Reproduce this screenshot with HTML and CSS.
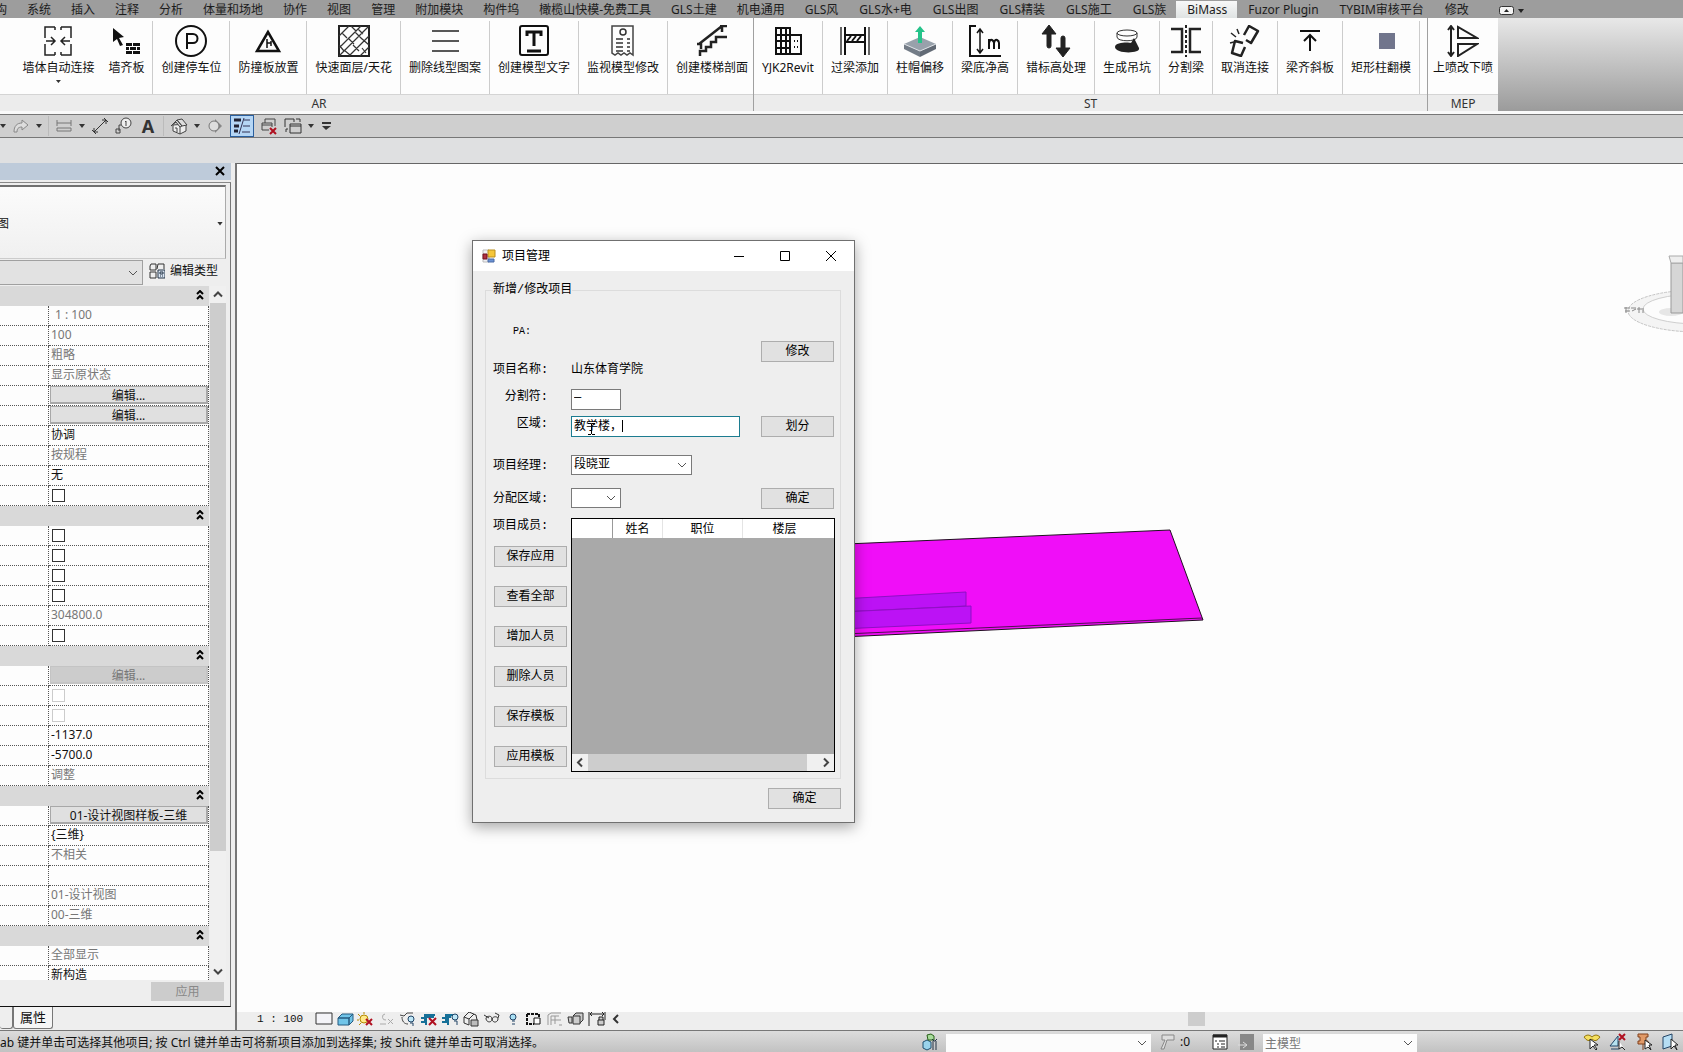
FILE: index.html
```html
<!doctype html>
<html lang="zh-CN">
    <head>
        <meta charset="utf-8">
        <title>项目管理</title>
        <link rel="stylesheet" href="styles.css">
    </head>
    <body>
        <div class="app">
            <nav class="menubar">
                <a href="#">构</a>
                <a href="#">系统</a>
                <a href="#">插入</a>
                <a href="#">注释</a>
                <a href="#">分析</a>
                <a href="#">体量和场地</a>
                <a href="#">协作</a>
                <a href="#">视图</a>
                <a href="#">管理</a>
                <a href="#">附加模块</a>
                <a href="#">构件坞</a>
                <a href="#">橄榄山快模-免费工具</a>
                <a href="#">GLS土建</a>
                <a href="#">机电通用</a>
                <a href="#">GLS风</a>
                <a href="#">GLS水+电</a>
                <a href="#">GLS出图</a>
                <a href="#">GLS精装</a>
                <a href="#">GLS施工</a>
                <a href="#">GLS族</a>
                <a href="#" class="active">BiMass</a>
                <a href="#">Fuzor Plugin</a>
                <a href="#">TYBIM审核平台</a>
                <a href="#">修改</a>
                <button class="collapse" aria-label="最小化功能区">
                    <svg width="26" height="10" viewBox="0 0 26 10"><rect x=".5" y=".5" width="14" height="8" rx="2" fill="#f4f4f4" stroke="#333"/><path d="M5 6l2.500-3L10 6z" fill="#222"/><path d="M19 3h6l-3 4z" fill="#222"/></svg>
                </button>
            </nav>

            <div class="ribbon">
                <section class="panel panel-ar">
                    <div class="tools">
                        <div class="group first">
                            <button><svg viewBox="0 0 32 32"><path d="M13 2H3v11M3 19v11h10M19 2h10v11M29 19v11H19M13 2v3M13 27v3M19 2v3M19 27v3" fill="none" stroke="#222" stroke-width="1.500"/><path d="M4 16h9M9 12l4 4-4 4M28 16h-9M23 12l-4 4 4 4" fill="none" stroke="#222" stroke-width="1.500"/></svg><span>墙体自动连接</span><i class="caret"></i></button>
                            <button><svg viewBox="0 0 32 32"><path d="M3 3l11 9-5 1 4 7-3 1-3-7-4 3z" fill="#111"/><path d="M16 18h6v3h-6zM23 18h7v3h-7zM16 22h3v3h-3zM20 22h6v3h-6zM27 22h3v3h-3zM16 26h6v3h-6zM23 26h7v3h-7z" fill="#111"/></svg><span>墙齐板</span></button>
                        </div>
                        <div class="group"><button><svg viewBox="0 0 32 32"><circle cx="16" cy="16" r="15" fill="none" stroke="#111" stroke-width="2"/><path d="M12 24V9h6a4 4 0 0 1 0 9h-6" fill="none" stroke="#111" stroke-width="2"/></svg><span>创建停车位</span></button></div>
                        <div class="group"><button><svg viewBox="0 0 32 32"><path d="M16 7L5 26h22z" fill="none" stroke="#111" stroke-width="2.500"/><path d="M15 14v9M15 18h4M19 16v5" stroke="#111" stroke-width="1.500"/></svg><span>防撞板放置</span></button></div>
                        <div class="group"><button><svg viewBox="0 0 32 32"><path d="M1 1h30v30H1z" fill="none" stroke="#222" stroke-width="2"/><path d="M1 11L11 1M1 23L23 1M1 31L31 1M11 31l20-20M22 31l9-9M4 8l5 5M13 1l5 5M10 13l6 6M20 4l5 5M1 20l5 6M17 7l7 7M15 20l6 6M23 13l8 7M6 25l6 5M24 23l4 5" fill="none" stroke="#333" stroke-width="1.200"/></svg><span>快速面层/天花</span></button></div>
                        <div class="group"><button><svg viewBox="0 0 32 32"><path d="M3 6h27M3 16h27M3 26h27" stroke="#222" stroke-width="1.500"/></svg><span>删除线型图案</span></button></div>
                        <div class="group"><button><svg viewBox="0 0 32 32"><rect x="2" y="1" width="28" height="29" rx="2" fill="none" stroke="#111" stroke-width="2"/><path d="M9 11V7h14v4M16 7v14M9 26h14" fill="none" stroke="#111" stroke-width="3"/></svg><span>创建模型文字</span></button></div>
                        <div class="group"><button><svg viewBox="0 0 32 32"><path d="M5 1h21v29l-3-2-3 2-3-2-3 2-3-2-3 2-3-2z" fill="none" stroke="#444" stroke-width="1.500"/><circle cx="16" cy="7" r="3" fill="none" stroke="#333" stroke-width="1.500"/><path d="M9 14h7M9 18h7M9 22h7M9 26h7M20 14h3M20 18h3M20 22h3M20 26h3" stroke="#333" stroke-width="1.500"/></svg><span>监视模型修改</span></button></div>
                        <div class="group"><button><svg viewBox="0 0 32 32"><path d="M3 19L26 1M1 19h4v5M24 1h7M26 1v6M4 31v-5h6v-4h5v-5h5v-5h6" fill="none" stroke="#222" stroke-width="2.500"/><path d="M26 12h5" stroke="#222" stroke-width="2.500"/></svg><span>创建楼梯剖面</span></button></div>
                    </div>
                    <h2>AR</h2>
                </section>
                <section class="panel">
                    <div class="tools">
                        <div class="group"><button><svg viewBox="0 0 32 32"><path d="M4 3h14v26H4zM9 3v26M14 3v26M4 10h14M4 16h14M4 23h14M18 10h11v19H18" fill="none" stroke="#111" stroke-width="2"/><path d="M22 16h1M25 16h1M22 22h1M25 22h1" stroke="#111" stroke-width="2"/></svg><span>YJK2Revit</span></button></div>
                        <div class="group"><button><svg viewBox="0 0 32 32"><path d="M2 2v28M30 2v28" stroke="#666" stroke-width="2"/><path d="M6 2v28M26 2v28M6 10h20M6 17h20M8 16l4-5M13 16l4-5M18 16l4-5" fill="none" stroke="#111" stroke-width="2"/></svg><span>过梁添加</span></button></div>
                        <div class="group"><button><svg viewBox="0 0 32 32"><path d="M16 12l16 7-16 7-16-7z" fill="#98a1ab"/><path d="M0 19l16 7v6L0 24z" fill="#737c87"/><path d="M32 19l-16 7v6l16-8z" fill="#626a75"/><path d="M0 19l16 7 16-7" fill="none" stroke="#dde1e5"/><path d="M14 18V7h-3l5-6 5 6h-3v11z" fill="#25c38a"/></svg><span>柱帽偏移</span></button></div>
                        <div class="group"><button><svg viewBox="0 0 32 32"><path d="M7 1H1v30h31" fill="none" stroke="#111" stroke-width="2"/><path d="M11 4v24M8 8l3-4 3 4M8 24l3 4 3-4" fill="none" stroke="#111" stroke-width="1.500"/><path d="M20 24V14M20 18q1-4 3-3t2 3v6M25 18q1-4 3-3t2 3v6" fill="none" stroke="#111" stroke-width="2"/></svg><span>梁底净高</span></button></div>
                        <div class="group"><button><svg viewBox="0 0 32 32"><path d="M9 0l7 9h-5v12a2 2 0 0 1-4 0V9H2zM23 32l-7-9h5V13a2 2 0 0 1 4 0v10h5z" fill="#222" stroke="#222"/></svg><span>错标高处理</span></button></div>
                        <div class="group"><button><svg viewBox="0 0 32 32"><ellipse cx="16" cy="8" rx="10" ry="3" fill="none" stroke="#333"/><path d="M6 8v4c0 5 20 5 20 0V8" fill="none" stroke="#333"/><path d="M4 22c0-5 14-5 16-4l3-5 5 10c2 6-24 6-24-1z" fill="#222"/></svg><span>生成吊坑</span></button></div>
                        <div class="group"><button><svg viewBox="0 0 32 32"><path d="M1 4h11v23H1M31 4H20v23h11" fill="none" stroke="#222" stroke-width="2.500"/><path d="M16 0v32" stroke="#222" stroke-width="2" stroke-dasharray="3 2"/></svg><span>分割梁</span></button></div>
                        <div class="group"><button><svg viewBox="0 0 32 32"><path d="M15 10l5-9 9 5-7 12-5-3M14 18l-8-2-3 12 9 3 4-9" fill="none" stroke="#222" stroke-width="2.500" stroke-linejoin="round"/><path d="M2 8l5 4M8 4l2 5M1 18l4-1" stroke="#222" stroke-width="1.500"/></svg><span>取消连接</span></button></div>
                        <div class="group"><button><svg viewBox="0 0 32 32"><path d="M6 6h20" stroke="#111" stroke-width="2"/><path d="M16 26V10M10 16l6-6 6 6" fill="none" stroke="#111" stroke-width="2"/></svg><span>梁齐斜板</span></button></div>
                        <div class="group"><button><svg viewBox="0 0 32 32"><path d="M14 8h16v16H14z" fill="#71758c"/></svg><span>矩形柱翻模</span></button></div>
                    </div>
                    <h2>ST</h2>
                </section>
                <section class="panel">
                    <div class="tools">
                        <div class="group"><button><svg viewBox="0 0 32 32"><path d="M4 1v30M1 5l3-4 3 4M1 27l3 4 3-4M11 2v11h19zM11 31V19h19z" fill="none" stroke="#222" stroke-width="2"/></svg><span>上喷改下喷</span></button></div>
                    </div>
                    <h2>MEP</h2>
                </section>
            </div>

            <div class="quickbar">
                <i class="caret"></i>
                <button aria-label="重做"><svg viewBox="0 0 18 18"><path d="M2 15c0-6 3-9 8-9V3l6 5-6 5v-3c-4 0-5 2-5 5z" fill="#ddd" stroke="#888"/></svg></button>
                <i class="caret"></i>
                <i class="sep"></i>
                <button aria-label="测量"><svg viewBox="0 0 18 18"><path d="M2 6h14M2 3v6M16 3v6M2 11h14v3H2z" fill="none" stroke="#777"/></svg></button>
                <i class="caret"></i>
                <button aria-label="对齐标注"><svg viewBox="0 0 18 18"><path d="M3 15L15 3M3 11v4h4M11 3h4v4M1 13l4 4M13 1l4 4" fill="none" stroke="#333"/></svg></button>
                <button aria-label="标记"><svg viewBox="0 0 18 18"><circle cx="11" cy="6" r="5" fill="#eee" stroke="#444"/><path d="M10 5l1-1v5M6 8H4v6M1 12h4v4H1z" fill="none" stroke="#444"/></svg></button>
                <button class="letter" aria-label="文字">A</button>
                <i class="sep"></i>
                <button aria-label="三维视图"><svg viewBox="0 0 18 18"><path d="M3 8v6l7 3 6-3V7z" fill="#eee" stroke="#444"/><path d="M1 9l6-6 5 6-2 1-4-5zM7 3l5-1 5 6-5 1z" fill="#ddd" stroke="#444"/><path d="M10 10v7M5 11h2v4" fill="none" stroke="#444"/></svg></button>
                <i class="caret"></i>
                <button aria-label="剖面"><svg viewBox="0 0 18 18"><path d="M9 2l7 7-7 7z" fill="#888"/><circle cx="8" cy="9" r="5" fill="#ddd" stroke="#777"/></svg></button>
                <button class="on" aria-label="细线"><svg viewBox="0 0 18 18"><path d="M1 3h7M1 9h5M1 14h4" stroke="#223" stroke-width="3"/><path d="M11 1L6 17M11 3h6M10 9h7M9 15h8" stroke="#335" fill="none"/></svg></button>
                <button aria-label="关闭隐藏窗口"><svg viewBox="0 0 18 18"><path d="M5 6V2h10v7M2 13V6h10v4M2 8h10M2 13h7" fill="none" stroke="#444"/><path d="M10 11l6 6M16 11l-6 6" stroke="#b01020" stroke-width="2"/></svg></button>
                <button aria-label="切换窗口"><svg viewBox="0 0 18 18"><path d="M1 10V2h9v3M6 7h11v9H6zM6 9h11M12 2h4v3M4 12H2v3" fill="none" stroke="#333"/></svg></button>
                <i class="caret"></i>
                <button aria-label="自定义"><svg viewBox="0 0 18 18"><path d="M2 6h9" stroke="#333" stroke-width="2"/><path d="M2 9h9l-5 4z" fill="#333"/></svg></button>
            </div>

            <main class="work">
                <aside class="palette">
                    <header><button aria-label="关闭属性"><svg width="10" height="10" viewBox="0 0 10 10"><path d="M1 1l8 8M9 1L1 9" stroke="#000" stroke-width="2"/></svg></button></header>
                    <div class="frame">
                        <div class="type"><span>图</span><i class="caret"></i></div>
                        <div class="filter">
                            <select aria-label="视图类型"><option></option></select>
                            <button><svg width="16" height="16" viewBox="0 0 16 16"><path d="M2 1h5v6H1V3zM9 1h6v5M1 9h6v6H1zM9 1L8 6" fill="none" stroke="#333"/><path d="M9 7h7v8H9z" fill="#dbe6f4" stroke="#234"/><path d="M11 9h3v2h-3zM11 13h1M13 13h1" stroke="#234" fill="none"/></svg>编辑类型</button>
                        </div>
                        <div class="sheet">
                            <table>
                                <colgroup><col class="key"><col></colgroup>
                                <tr class="cat"><td colspan="2"><svg viewBox="0 0 8 10"><path d="M1 4l3-3 3 3M1 9l3-3 3 3"/></svg></td></tr>
                                <tr><td></td><td class="dim indent">1 : 100</td></tr>
                                <tr><td></td><td class="dim">100</td></tr>
                                <tr><td></td><td class="dim">粗略</td></tr>
                                <tr><td></td><td class="dim">显示原状态</td></tr>
                                <tr><td></td><td><button>编辑...</button></td></tr>
                                <tr><td></td><td><button>编辑...</button></td></tr>
                                <tr><td></td><td>协调</td></tr>
                                <tr><td></td><td class="dim">按规程</td></tr>
                                <tr><td></td><td>无</td></tr>
                                <tr><td></td><td><input type="checkbox" aria-label="日光路径"></td></tr>
                                <tr class="cat"><td colspan="2"><svg viewBox="0 0 8 10"><path d="M1 4l3-3 3 3M1 9l3-3 3 3"/></svg></td></tr>
                                <tr><td></td><td><input type="checkbox" aria-label="裁剪视图"></td></tr>
                                <tr><td></td><td><input type="checkbox" aria-label="裁剪区域可见"></td></tr>
                                <tr><td></td><td><input type="checkbox" aria-label="注释裁剪"></td></tr>
                                <tr><td></td><td><input type="checkbox" aria-label="远剪裁激活"></td></tr>
                                <tr><td></td><td class="dim">304800.0</td></tr>
                                <tr><td></td><td><input type="checkbox" aria-label="剖面框"></td></tr>
                                <tr class="cat"><td colspan="2"><svg viewBox="0 0 8 10"><path d="M1 4l3-3 3 3M1 9l3-3 3 3"/></svg></td></tr>
                                <tr><td></td><td><button disabled>编辑...</button></td></tr>
                                <tr><td></td><td><input type="checkbox" aria-label="锁定的方向" disabled></td></tr>
                                <tr><td></td><td><input type="checkbox" aria-label="透视图" disabled></td></tr>
                                <tr><td></td><td>-1137.0</td></tr>
                                <tr><td></td><td>-5700.0</td></tr>
                                <tr><td></td><td class="dim">调整</td></tr>
                                <tr class="cat"><td colspan="2"><svg viewBox="0 0 8 10"><path d="M1 4l3-3 3 3M1 9l3-3 3 3"/></svg></td></tr>
                                <tr><td></td><td><button>01-设计视图样板-三维</button></td></tr>
                                <tr><td></td><td>{三维}</td></tr>
                                <tr><td></td><td class="dim">不相关</td></tr>
                                <tr><td></td><td></td></tr>
                                <tr><td></td><td class="dim">01-设计视图</td></tr>
                                <tr><td></td><td class="dim">00-三维</td></tr>
                                <tr class="cat"><td colspan="2"><svg viewBox="0 0 8 10"><path d="M1 4l3-3 3 3M1 9l3-3 3 3"/></svg></td></tr>
                                <tr><td></td><td class="dim">全部显示</td></tr>
                                <tr><td></td><td>新构造</td></tr>
                            </table>
                            <div class="vscroll">
                                <svg viewBox="0 0 16 16"><path d="M4 10l4-4 4 4"/></svg>
                                <div class="thumb"></div>
                                <svg viewBox="0 0 16 16"><path d="M4 6l4 4 4-4"/></svg>
                            </div>
                        </div>
                        <div class="apply"><button disabled>应用</button></div>
                    </div>
                    <div class="tabs"><button class="blank" aria-label="项目浏览器"></button><button>属性</button></div>
                </aside>

                <section class="view">
                    <div class="canvas">
                        <svg class="slab" width="404" height="120" viewBox="0 0 404 120">
                            <path d="M0 17L370 1l33 90L0 110z" fill="#f00ef8" stroke="#201020"/>
                            <path d="M0 107l402-18" stroke="#501050" fill="none"/>
                            <path d="M40 70l126-7v14l-126 6z" fill="#bc12f5" stroke="#8f0fc4"/>
                            <path d="M40 83l131-6v17l-131 6z" fill="#bc12f5" stroke="#8f0fc4"/>
                        </svg>
                        <svg class="cube" width="60" height="90" viewBox="0 0 60 90">
                            <ellipse cx="75" cy="60" rx="70" ry="21" fill="#f4f4f4" stroke="#c4c4c4" stroke-dasharray="3 1"/>
                            <ellipse cx="75" cy="58" rx="55" ry="15" fill="#fcfcfc" stroke="#cfcfcf"/>
                            <ellipse cx="48" cy="61" rx="12" ry="4" fill="#e6e6e6"/>
                            <path d="M48 12h12v50H48z" fill="#d6d6d6" stroke="#999"/>
                            <path d="M46 5h14v7H48z" fill="#eee" stroke="#aaa"/>
                            <path d="M1 57h6M2 60h5M3 56v6M8 57h5M9 60l4-2M14 58h5M16 56v6M20 57v5" stroke="#888" fill="none"/>
                        </svg>
                    </div>
                    <div class="viewbar">
                        <span class="scale">1 : 100</span>
                        <button aria-label="详细程度"><svg viewBox="0 0 18 16"><path d="M1 2h16v11H1z" fill="#f4f4f8" stroke="#333"/></svg></button>
                        <button aria-label="视觉样式"><svg viewBox="0 0 18 16"><path d="M2 7l4-4h11l-4 4zM2 7h11v7H2zM13 7l4-4v7l-4 4z" fill="#70c4e8" stroke="#255a80"/></svg></button>
                        <button aria-label="日光路径"><svg viewBox="0 0 18 16"><circle cx="7" cy="8" r="4" fill="#ffe98a" stroke="#b58a00"/><path d="M7 0v3M1 3l2 2M0 9h2M2 14l2-2" stroke="#b58a00"/><path d="M9 8l6 6M15 8l-6 6" stroke="#b01020" stroke-width="2"/></svg></button>
                        <button aria-label="阴影"><svg viewBox="0 0 18 16"><path d="M7 3a3 3 0 1 0 1 6M2 13h6M10 8l5 5M15 8l-5 5" fill="none" stroke="#aaa"/></svg></button>
                        <button aria-label="渲染"><svg viewBox="0 0 18 16"><path d="M1 4l4 1 3-3h6M3 6c0 4 2 7 6 7" fill="none" stroke="#444"/><circle cx="12" cy="8" r="3" fill="#bfe8f8" stroke="#246"/><path d="M11 12h3v3" stroke="#246" fill="none"/></svg></button>
                        <button aria-label="裁剪视图"><svg viewBox="0 0 18 16"><path d="M1 11h4V4h10M1 7h3M6 14V6h8" fill="none" stroke="#167098" stroke-width="2"/><path d="M9 7l7 7M16 7l-7 7" stroke="#b01020" stroke-width="2"/></svg></button>
                        <button aria-label="显示裁剪区域"><svg viewBox="0 0 18 16"><path d="M1 11h4V4h7M1 7h3M7 14V6h3" fill="none" stroke="#167098" stroke-width="2"/><circle cx="14" cy="6" r="3" fill="#bfe8f8" stroke="#246"/><path d="M13 10h3v4" stroke="#246" fill="none"/></svg></button>
                        <button aria-label="锁定三维视图"><svg viewBox="0 0 18 16"><path d="M2 6l5-5 7 3 1 5M2 6v6l5 2V8zM7 8l5-5" fill="none" stroke="#333"/><path d="M9 9h7v6H9z" fill="#bbb" stroke="#333"/></svg></button>
                        <button aria-label="临时隐藏"><svg viewBox="0 0 18 16"><path d="M1 4l5 3M3 7c0 5 6 5 6 1s-5-3-6-1M9 8c1 5 6 3 6 0s-5-3-6 0M15 7l1-3-4-2" fill="none" stroke="#333"/></svg></button>
                        <button aria-label="显示隐藏图元"><svg viewBox="0 0 18 16"><circle cx="9" cy="6" r="3" fill="#a8e0f4" stroke="#246"/><path d="M8 10h3M8 13h3" stroke="#246"/></svg></button>
                        <button aria-label="临时视图属性"><svg viewBox="0 0 18 16"><path d="M2 3h12v4M2 3v10h7" fill="none" stroke="#111" stroke-width="2" stroke-dasharray="3 1"/><path d="M9 7h6v6H9z" fill="#fff" stroke="#111"/></svg></button>
                        <button aria-label="分析模型"><svg viewBox="0 0 18 16"><path d="M2 14V4l3-2h10M5 14V5h8M9 5v8M5 9h10M13 14h3" fill="none" stroke="#999"/></svg></button>
                        <button aria-label="位移集"><svg viewBox="0 0 18 16"><path d="M6 5l3-3h7v7l-3 3M6 5h7v8H6zM1 6h4v6H2z" fill="#ccc" stroke="#333"/></svg></button>
                        <button aria-label="约束"><svg viewBox="0 0 18 16"><path d="M1 0v15M17 0v9M2 3h14M4 1L2 3l2 2M14 1l2 2-2 2" fill="none" stroke="#222"/><path d="M10 9h6v5h-6zM11 9V6h4v3" fill="#ccc" stroke="#222"/></svg></button>
                        <button aria-label="收起"><svg viewBox="0 0 18 16"><path d="M9 4L5 8l4 4" fill="none" stroke="#333" stroke-width="2"/></svg></button>
                        <i class="hthumb"></i>
                    </div>
                </section>
            </main>

            <footer class="status">
                <p>ab 键并单击可选择其他项目; 按 Ctrl 键并单击可将新项目添加到选择集; 按 Shift 键并单击可取消选择。</p>
                <button aria-label="工作集"><svg viewBox="0 0 18 18"><path d="M2 9l4-2 4 2v6l-4 2-4-2z" fill="#9ad4ec" stroke="#205070"/><path d="M6 2l4-1 3 2v4H7z" fill="#a8dc9c" stroke="#286018"/><path d="M12 8v9M15 8v9M11 6l2 2h1l2-2" fill="none" stroke="#234"/></svg></button>
                <select class="workset" aria-label="活动工作集"><option></option></select>
                <button aria-label="可编辑"><svg viewBox="0 0 18 18"><path d="M3 2h12v5H8l-3 9H2l4-9H3z" fill="#ddd" stroke="#888"/></svg></button>
                <span class="count">:0</span>
                <button aria-label="设计选项"><svg viewBox="0 0 18 18"><path d="M2 2h14v14H2z" fill="#fff" stroke="#222"/><path d="M2 3h14" stroke="#222" stroke-width="3"/><path d="M4 8h2M8 8h6M6 11h2M10 11h4M6 14h2M10 14h4" stroke="#222"/></svg></button>
                <button aria-label="添加到集"><svg viewBox="0 0 18 18"><path d="M3 1h14v16H3z" fill="#888"/><path d="M1 12h8M6 9l4 3-4 3" fill="none" stroke="#ddd"/></svg></button>
                <select class="option" aria-label="设计选项"><option>主模型</option></select>
                <div class="picks">
                    <button aria-label="选择链接"><svg viewBox="0 0 18 18"><path d="M1 4q4-4 8 0 4-4 8 0-4 6-8 2-4 4-8-2z" fill="#f4df60" stroke="#987a10"/><path d="M7 6v10l3-3 3 4 1-1-3-4h4z" fill="#fff" stroke="#222"/></svg></button>
                    <button aria-label="选择基线图元"><svg viewBox="0 0 18 18"><path d="M1 13L9 3v10zM2 16h8" fill="#b6e2ef" stroke="#246"/><path d="M10 1l6 6M16 1l-6 6" stroke="#b01020" stroke-width="2"/><path d="M10 8v8l3-2 3 3" fill="#fff" stroke="#222"/></svg></button>
                    <button aria-label="选择锁定图元"><svg viewBox="0 0 18 18"><path d="M3 1h10v3h-2v4h2v3H3V8h2V4H3zM8 11v6" fill="#e09a68" stroke="#81401c"/><path d="M10 7v9l3-2 3 3-2-5h3z" fill="#fff" stroke="#222"/></svg></button>
                    <button aria-label="按面选择"><svg viewBox="0 0 18 18"><path d="M2 4l9-3v12l-9 3z" fill="#b6def4" stroke="#246"/><path d="M10 6v10l3-3 3 4-2-5h3z" fill="#fff" stroke="#222"/></svg></button>
                </div>
            </footer>
        </div>

        <div class="dialog" role="dialog" aria-labelledby="dialogTitle">
            <header>
                <svg width="14" height="14" viewBox="0 0 14 14"><path d="M1 1h6v12H1z" fill="#f0f0f4" stroke="#bbb"/><path d="M6 1h7v7H6z" fill="#f5c63a" stroke="#b98e1c"/><path d="M1 5h4v5H1z" fill="#b03040" stroke="#701020"/><path d="M6 10h6v3H6z" fill="#6a92d4" stroke="#4a6aa4"/></svg>
                <h1 id="dialogTitle">项目管理</h1>
                <button aria-label="最小化"><svg width="12" height="12" viewBox="0 0 12 12"><path d="M1 6.500h10" /></svg></button>
                <button aria-label="最大化"><svg width="12" height="12" viewBox="0 0 12 12"><path d="M1.500 1.500h9v9h-9z"/></svg></button>
                <button aria-label="关闭"><svg width="12" height="12" viewBox="0 0 12 12"><path d="M1 1l10 10M11 1L1 11"/></svg></button>
            </header>
            <form>
                <fieldset>
                    <legend>新增/修改项目</legend>
                    <div class="fields">
                        <span class="label pa">PA:</span>
                        <button type="button" class="btn edit">修改</button>
                        <span class="label mid">项目名称:</span>
                        <span class="mid">山东体育学院</span>
                        <label class="label row3" for="splitter">分割符:</label>
                        <input class="row3 short" type="text" id="splitter" value="—">
                        <label class="label row4" for="area">区域:</label>
                        <div class="row4 typing">
                            <input type="text" id="area" value="教学楼，">
                            <i class="textcaret"></i>
                            <svg class="ibeam" width="7" height="12" viewBox="0 0 7 12"><path d="M0 .5h3M4 .5h3M3.500 1v10M0 11.500h3M4 11.500h3" stroke="#000" fill="none"/></svg>
                        </div>
                        <button type="button" class="btn row4">划分</button>
                        <label class="label tall row5" for="manager">项目经理:</label>
                        <select class="row5 manager" id="manager"><option>段晓亚</option></select>
                        <label class="label tall row6" for="assign">分配区域:</label>
                        <select class="row6 short" id="assign"><option></option></select>
                        <button type="button" class="btn row6">确定</button>
                        <div class="actions">
                            <span class="label">项目成员:</span>
                            <button type="button" class="btn">保存应用</button>
                            <button type="button" class="btn">查看全部</button>
                            <button type="button" class="btn">增加人员</button>
                            <button type="button" class="btn">删除人员</button>
                            <button type="button" class="btn">保存模板</button>
                            <button type="button" class="btn">应用模板</button>
                        </div>
                        <div class="members">
                            <table>
                                <tr><th class="corner"></th><th class="name">姓名</th><th class="post">职位</th><th>楼层</th></tr>
                            </table>
                            <div class="hscroll">
                                <svg viewBox="0 0 16 16"><path d="M10 4L6 8l4 4"/></svg>
                                <div class="track"><div class="thumb"></div></div>
                                <svg viewBox="0 0 16 16"><path d="M6 4l4 4-4 4"/></svg>
                            </div>
                        </div>
                    </div>
                </fieldset>
                <button type="button" class="btn ok">确定</button>
            </form>
        </div>
    </body>
</html>
```
FILE: styles.css
```css
*{
    box-sizing: border-box;
}
body{
    margin: 0;
    font-family: "Noto Sans", "Noto Sans CJK SC", sans-serif;
    font-size: 12px;
    line-height: 16px;
    color: #111;
    overflow: hidden;
}
button, input, select{
    font: inherit;
    color: inherit;
    margin: 0;
    padding: 0;
    border: none;
    background: none;
    border-radius: 0;
}
select{
    appearance: none;
}
.app{
    height: 100vh;
    display: flex;
    flex-direction: column;
    background: #dfe0e1;
}
.caret{
    flex: none;
    width: 6px;
    height: 4px;
    background: #333;
    clip-path: polygon(0 0, 100% 0, 50% 100%);
}

/* menu tabs */
.menubar{
    height: 18px;
    display: flex;
    align-items: flex-end;
    background: #9d9d9d;
    white-space: nowrap;
    margin-left: -15px;
}
.menubar a{
    padding: 0 10px;
    height: 17px;
    line-height: 17px;
    color: #1c1c1c;
    text-decoration: none;
}
.menubar a:nth-child(n+16){
    padding-left: 11px;
}
.menubar a.active{
    background: linear-gradient(#f8f8f8, #dfe3e3);
}
.menubar .collapse{
    margin-left: 20px;
    height: 14px;
}

/* ribbon */
.ribbon{
    height: 96px;
    display: flex;
    border-bottom: 3px solid #fafafa;
    background: linear-gradient(#e8e8e8, #9b9b9b);
}
.panel{
    display: flex;
    flex-direction: column;
    background: #fdfdfd;
    border-right: 1px solid #a0a0a0;
}
.panel:last-child{
    border-right: none;
}
.panel-ar{
    margin-left: -115px;
    width: 869px;
}
.tools{
    flex: 1;
    display: flex;
    padding-top: 3px;
}
.group{
    display: flex;
    gap: 14px;
    padding: 0 8px;
    border-right: 1px solid #ccc;
}
.panel-ar .group:last-child{
    padding-right: 5px;
    border-right: none;
}
.panel:nth-child(2) .tools{
    padding-right: 7px;
}
.panel:last-child .group{
    padding: 0 5px;
    border-right: none;
}
.group.first{
    flex: 1;
    justify-content: flex-end;
}
.group button{
    display: flex;
    flex-direction: column;
    align-items: center;
    padding-top: 4px;
    white-space: nowrap;
}
.group svg{
    width: 32px;
    height: 32px;
    margin-bottom: 3px;
}
.group .caret{
    margin-top: 4px;
    width: 5px;
    height: 3px;
}
.panel h2{
    margin: 0;
    height: 17px;
    background: #ececec;
    border-top: 1px solid #d4d4d4;
    font-size: 12px;
    line-height: 18px;
    font-weight: normal;
    text-align: center;
    color: #333;
}

/* quick access bar */
.quickbar{
    height: 24px;
    display: flex;
    align-items: center;
    gap: 6px;
    background: #cfcfcf;
    border-top: 1px solid #777;
    border-bottom: 1px solid #777;
}
.quickbar button{
    width: 18px;
    height: 18px;
}
.quickbar svg{
    display: block;
    width: 18px;
    height: 18px;
}
.quickbar .sep{
    width: 1px;
    height: 20px;
    background: #bbb;
}
.quickbar .letter{
    font-size: 18px;
    line-height: 18px;
    font-weight: bold;
    color: #333;
}
.quickbar .on{
    width: 24px;
    height: 22px;
    padding: 0 2px;
    background: #b5d6f5;
    border: 1px solid #2a5f9e;
}

/* main area */
.work{
    flex: 1;
    min-height: 0;
    display: flex;
    gap: 4px;
    margin-top: 25px;
    background: #eee;
}
.palette{
    width: 231px;
    display: flex;
    flex-direction: column;
}
.palette header{
    height: 17px;
    margin-bottom: 2px;
    padding-right: 4px;
    background: #becbda;
    text-align: right;
}
.palette header svg{
    display: block;
    margin-top: 3px;
}
.palette header button{
    width: 12px;
}
.frame{
    flex: 1;
    min-height: 0;
    display: flex;
    flex-direction: column;
    border-top: 1px solid #888;
    border-right: 1px solid #777;
    border-bottom: 1px solid #111;
}
.type{
    height: 74px;
    margin: 2px 4px 0 0;
    padding: 2px 2px 0 0;
    display: flex;
    justify-content: space-between;
    align-items: center;
    border-top: 2px solid #707070;
    border-right: 1px solid #aaa;
    border-bottom: 1px solid #ccc;
    background: linear-gradient(#fbfbfb, #f0f0f0);
}
.type span{
    margin-left: -3px;
}
.filter{
    display: flex;
    align-items: center;
    gap: 6px;
    margin: 1px 0;
}
.filter button{
    display: flex;
    align-items: center;
    gap: 5px;
    padding-bottom: 4px;
}
.filter select, .workset, .option, .fields select{
    background-image: url("data:image/svg+xml,%3Csvg xmlns='http://www.w3.org/2000/svg' width='10' height='6'%3E%3Cpath d='M1 1l4 4 4-4' fill='none' stroke='%23555'/%3E%3C/svg%3E");
    background-repeat: no-repeat;
    background-position: right 4px center;
}
.filter select{
    width: 143px;
    height: 25px;
    border: 1px solid #a0a0a0;
    border-left: none;
    background-color: #e2e2e2;
}
.sheet{
    flex: 1;
    min-height: 0;
    overflow: hidden;
    display: flex;
    gap: 1px;
}
.sheet table{
    width: 209px;
    height: max-content;
    border-spacing: 0;
    table-layout: fixed;
    background: #fdfdfd;
}
.sheet .key{
    width: 49px;
}
.sheet td{
    height: 20px;
    padding: 0 0 1px 2px;
    border-right: 1px dotted #555;
    border-bottom: 1px dotted #555;
    line-height: 18px;
    white-space: nowrap;
}
.sheet td.dim{
    color: #777;
}
.sheet td.indent{
    padding-left: 6px;
}
.sheet .cat td{
    background: #d9d9d9;
    border: none;
    text-align: right;
    padding-right: 5px;
}
.cat svg{
    width: 8px;
    height: 10px;
    fill: none;
    stroke: #000;
    stroke-width: 2;
}
.sheet td button{
    display: block;
    width: 158px;
    height: 18px;
    margin-left: -1px;
    padding-top: 1px;
    line-height: 15px;
    background: #e0e0e0;
    border: 1px solid #a8a8a8;
    border-right-width: 2px;
    border-bottom-width: 2px;
}
.sheet td button:disabled{
    background: #ccc;
    border-color: #c4c4c4;
    color: #777;
}
.sheet input{
    display: block;
    appearance: none;
    width: 13px;
    height: 13px;
    margin-left: 1px;
    border: 1px solid #333;
    background: #fff;
}
.sheet input:disabled{
    border-color: #ccc;
}
.vscroll{
    width: 16px;
    display: flex;
    flex-direction: column;
    background: #f0f0f0;
}
.vscroll svg, .hscroll svg{
    flex: none;
    width: 16px;
    height: 17px;
    fill: none;
    stroke: #444;
    stroke-width: 2;
}
.vscroll .thumb{
    height: 79%;
    margin-bottom: auto;
    background: #cdcdcd;
}
.apply{
    height: 26px;
    padding: 2px 6px 0 0;
    text-align: right;
}
.apply button{
    width: 73px;
    height: 19px;
    background: #ccc;
    color: #888;
}
.tabs{
    height: 23px;
    display: flex;
}
.tabs button{
    width: 40px;
    height: 22px;
    padding-bottom: 2px;
    font-size: 13px;
    border: 1px solid #777;
    border-top: none;
    border-radius: 0 0 3px 3px;
    background: #f6f6f6;
}
.tabs .blank{
    width: 13px;
    border-left: none;
    background: #eee;
}
.view{
    flex: 1;
    min-width: 0;
    display: flex;
    flex-direction: column;
    border-top: 1px solid #666;
    border-left: 2px solid #777;
}
.canvas{
    flex: 1;
    position: relative;
    overflow: hidden;
    background: #fdfdfd;
}
.slab{
    position: absolute;
    left: 563px;
    top: 365px;
}
.cube{
    position: absolute;
    right: 0;
    top: 87px;
}
.viewbar{
    height: 18px;
    display: flex;
    align-items: center;
    gap: 3px;
    padding-bottom: 4px;
    background: #eee;
}
.viewbar .scale{
    width: 55px;
    margin-left: 20px;
    font-family: "Liberation Mono", monospace;
    font-size: 11px;
    white-space: nowrap;
}
.viewbar button{
    width: 18px;
    height: 16px;
}
.viewbar svg{
    display: block;
    width: 18px;
    height: 16px;
}
.hthumb{
    width: 17px;
    height: 14px;
    margin: 0 478px 0 auto;
    background: #cdcdcd;
}

/* status bar */
.status{
    height: 22px;
    display: flex;
    align-items: center;
    border-top: 1px solid #777;
    background: linear-gradient(#dcdcdc, #c2c2c2);
    padding-right: 4px;
}
.status p{
    width: 921px;
    margin: 2px 0 0;
    white-space: nowrap;
}
.status button{
    width: 18px;
    height: 18px;
    flex: none;
}
.status svg{
    display: block;
    width: 18px;
    height: 18px;
}
.status select{
    align-self: flex-end;
    height: 18px;
    background-color: #fcfcfc;
    color: #777;
}
.status .workset{
    width: 205px;
    margin: 0 8px 0 7px;
}
.status .count{
    width: 34px;
    padding-left: 3px;
}
.status .option{
    width: 154px;
    margin-left: 8px;
    padding: 2px 0 0 2px;
}
.status button + button{
    margin-left: 8px;
}
.picks{
    display: flex;
    margin-left: auto;
}

/* project dialog */
.dialog{
    position: absolute;
    left: 472px;
    top: 240px;
    width: 383px;
    border: 1px solid #707070;
    background: #eee;
    box-shadow: 0 4px 14px rgba(0, 0, 0, .35);
    font-family: "Liberation Mono", "Noto Sans CJK SC", monospace;
    color: #000;
}
.dialog header{
    height: 30px;
    padding-left: 9px;
    display: flex;
    align-items: center;
    background: #fff;
}
.dialog h1{
    flex: 1;
    margin: 0 0 0 6px;
    padding-top: 2px;
    font-size: 12px;
    font-weight: normal;
}
.dialog header button{
    width: 46px;
    height: 30px;
}
.dialog header button svg{
    display: block;
    margin: 0 auto;
    fill: none;
    stroke: #000;
}
.dialog form{
    padding: 10px 13px 13px 12px;
}
.dialog fieldset{
    margin: 0;
    padding: 0 5px 6px 7px;
    border: 1px solid #dcdcdc;
}
.dialog legend{
    padding: 0;
    line-height: 18px;
}
.fields{
    padding-top: 14px;
    display: grid;
    grid-template-columns: 74px 1fr 74px;
    grid-template-rows: 36px 40px 27px 39px 33px 30px auto;
    column-gap: 4px;
    align-items: start;
}
.label{
    grid-column: 1;
    padding-right: 19px;
    line-height: 16px;
    text-align: right;
    white-space: nowrap;
}
.label.tall{
    line-height: 22px;
}
.label.pa{
    align-self: center;
    padding-top: 2px;
    padding-right: 36px;
    font-size: 10px;
}
.mid{
    grid-row: 2;
    align-self: center;
    padding-top: 2px;
}
.row3{
    grid-row: 3;
}
.row4{
    grid-row: 4;
}
.row5{
    grid-row: 5;
}
.row6{
    grid-row: 6;
}
.btn{
    width: 73px;
    height: 21px;
    padding-top: 2px;
    line-height: 17px;
    border: 1px solid #adadad;
    background: #e1e1e1;
}
.fields > .btn{
    grid-column: 3;
}
.btn.edit{
    grid-row: 1 / 3;
    align-self: center;
}
.fields input, .fields select{
    height: 21px;
    padding: 0 2px 3px;
    border: 1px solid #7a7a7a;
    background-color: #fff;
}
.fields select{
    height: 20px;
    padding-bottom: 0;
}
.fields .short{
    width: 50px;
}
.fields .manager{
    width: 121px;
}
.typing{
    position: relative;
    width: 169px;
}
.fields .typing input{
    display: block;
    width: 100%;
    border-color: #1c7c90;
}
.textcaret{
    position: absolute;
    left: 51px;
    top: 4px;
    width: 1px;
    height: 12px;
    background: #000;
}
.ibeam{
    position: absolute;
    left: 17px;
    top: 7px;
}
.actions{
    grid-column: 1;
    grid-row: 7;
    display: flex;
    flex-direction: column;
    gap: 19px;
}
.actions .label{
    margin-bottom: -7px;
}
.actions .btn{
    margin-left: 1px;
}
.members{
    grid-column: 2 / 4;
    grid-row: 7;
    height: 254px;
    display: flex;
    flex-direction: column;
    justify-content: space-between;
    border: 1px solid #000;
    background: #a9a9a9;
}
.members table{
    width: 100%;
    height: 19px;
    border-spacing: 0;
    table-layout: fixed;
    background: #fff;
}
.members th{
    padding: 2px 0 0;
    font-weight: normal;
    border-right: 1px solid #e4e4e4;
}
.members th:last-child{
    border-right: none;
    padding-right: 8px;
}
.members .corner{
    width: 41px;
    border-right-color: #999;
}
.members .name{
    width: 50px;
}
.members .post{
    width: 80px;
}
.hscroll{
    height: 17px;
    display: flex;
    background: #f0f0f0;
}
.track{
    flex: 1;
}
.track .thumb{
    width: 95%;
    height: 17px;
    background: #cdcdcd;
}
.btn.ok{
    display: block;
    margin: 9px 0 0 auto;
}
```
